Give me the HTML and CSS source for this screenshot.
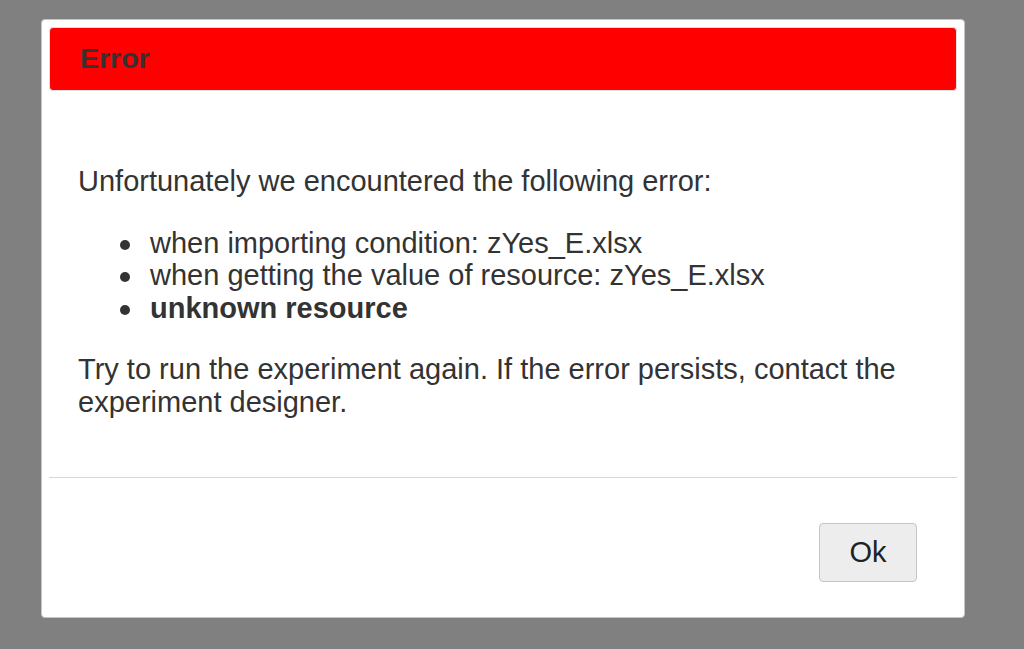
FILE: index.html
```html
<!DOCTYPE html>
<html lang="en">
<head>
<meta charset="UTF-8">
<meta name="viewport" content="width=device-width, initial-scale=1.0">
<title>Error</title>
<link rel="stylesheet" href="styles.css">
</head>
<body>
<!-- Error dialog -->
<div class="dialog">
    <div class="dialog-title">Error</div>
    <div class="dialog-content">
        <p>Unfortunately we encountered the following error:</p>
        <ul>
            <li>when importing condition: zYes_E.xlsx</li>
            <li>when getting the value of resource: zYes_E.xlsx</li>
            <li><strong>unknown resource</strong></li>
        </ul>
        <p>Try to run the experiment again. If the error persists, contact the experiment designer.</p>
    </div>
    <div class="dialog-buttons">
        <button type="button" class="ok-btn">Ok</button>
    </div>
</div>
</body>
</html>
```

FILE: styles.css
```css
/* Page overlay */
body {
    margin: 0;
    background-color: #808080;
    font-family: "Liberation Sans", Arial, sans-serif;
    color: #333;
}
/* Dialog box */
.dialog {
    box-sizing: border-box;
    width: 924px;
    margin: 19px 0 0 41px;
    padding: 7px;
    background-color: #fff;
    border: 1px solid #c5c5c5;
    border-radius: 4px;
}
/* Title bar */
.dialog-title {
    height: 64px;
    box-sizing: border-box;
    padding-left: 30px;
    background-color: #f00;
    border: 1px solid #dde3e3;
    border-radius: 4px;
    font-size: 28.5px;
    font-weight: bold;
    line-height: 60px;
    color: #333;
}
/* Message */
.dialog-content {
    padding: 45px 29px 30px;
    font-size: 29px;
    line-height: 32.5px;
}
.dialog-content p {
    margin: 29px 0;
}
.dialog-content ul {
    margin: 29px 0;
    padding-left: 72px;
    list-style: none;
}
.dialog-content li::before {
    content: "";
    display: inline-block;
    width: 10px;
    height: 10px;
    margin-left: -30px;
    margin-right: 20px;
    border-radius: 50%;
    background-color: #333;
    vertical-align: middle;
}
/* Button pane */
.dialog-buttons {
    display: flex;
    justify-content: flex-end;
    padding: 45px 40px 28px;
    border-top: 1px solid #d6d6d6;
}
.ok-btn {
    width: 98px;
    height: 59px;
    background-color: #ededed;
    border: 1px solid #c5c5c5;
    border-radius: 4px;
    font-family: "Liberation Sans", Arial, sans-serif;
    font-size: 29px;
    color: #222;
}
```
